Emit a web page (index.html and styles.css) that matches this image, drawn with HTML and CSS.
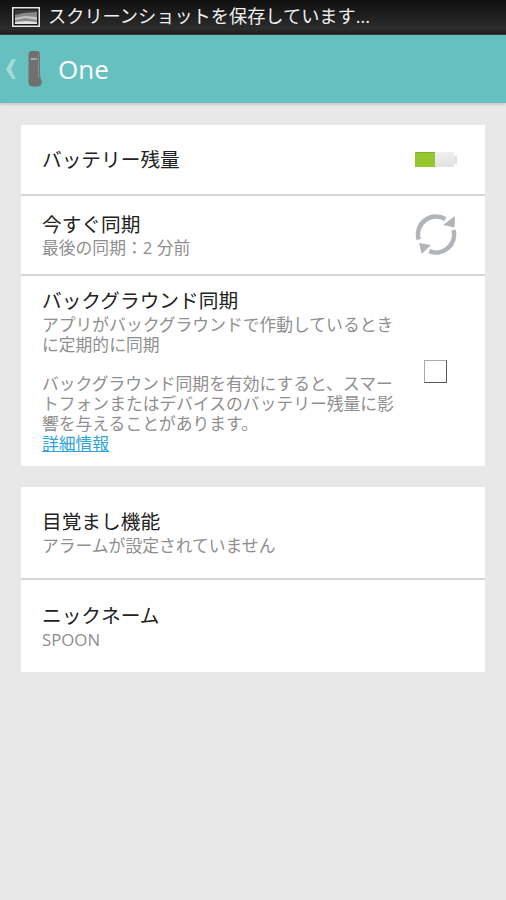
FILE: index.html
```html
<!DOCTYPE html>
<html lang="ja">
<head>
    <meta charset="UTF-8">
    <meta name="viewport" content="width=device-width, initial-scale=1.0">
    <title>One</title>
    <link rel="stylesheet" href="styles.css">
</head>
<body>

    <div class="status-bar">
        <svg class="status-icon" width="28" height="20" viewBox="0 0 28 20">
            <rect x="0.75" y="0.75" width="26.5" height="18.5" fill="#1a1a1a" stroke="#e8e8e8" stroke-width="1.5"/>
            <rect x="3" y="3" width="22" height="14" fill="#8a8a8a"/>
            <path d="M3 8 L12 6 L25 5 V3 H3 Z" fill="#3c3c3c"/>
            <path d="M3 11 L13 9 L25 10 V13 L13 11 L3 13 Z" fill="#c4c4c4"/>
            <path d="M3 15 L14 14 L25 15 V17 H3 Z" fill="#e4e4e4"/>
        </svg>
        <span class="status-text">スクリーンショットを保存しています...</span>
    </div>

    <header class="action-bar">
        <svg class="back-icon" width="12" height="20" viewBox="0 0 12 20">
            <path d="M7 0 H11 L6 10 L11 20 H7 L1 10 Z" fill="#a3dad7"/>
        </svg>
        <svg class="device-icon" width="14" height="36" viewBox="0 0 14 36">
            <path d="M4 0 H9 Q12 0 12 4 V23 Q12 27 13.5 30 Q14.5 35.5 9 35.5 H5 Q0.5 35.5 0.5 31 V4 Q0.5 0 4 0 Z" fill="#707070"/>
            <rect x="2.5" y="7" width="6.5" height="2" rx="1" fill="#a8a8a8"/>
            <path d="M10.5 3 V27" stroke="#8e8e8e" stroke-width="1"/>
        </svg>
        <h1 class="action-title">One</h1>
    </header>

    <main class="content">
        <section class="card">
            <div class="row row-battery">
                <div class="row-text">
                    <div class="row-title">バッテリー残量</div>
                </div>
                <div class="battery">
                    <div class="battery-fill"></div>
                    <div class="battery-empty"></div>
                    <div class="battery-tip"></div>
                </div>
            </div>
            <div class="row row-sync">
                <div class="row-text">
                    <div class="row-title">今すぐ同期</div>
                    <div class="row-sub">最後の同期：2 分前</div>
                </div>
                <svg class="sync-icon" width="42" height="42" viewBox="0 0 42 42">
                    <path d="M3.7 25.5 A18 18 0 0 1 30.5 5.2" fill="none" stroke="#b1b5ba" stroke-width="4.5"/>
                    <path d="M38.5 16 A18 18 0 0 1 14.3 37.2" fill="none" stroke="#b1b5ba" stroke-width="4.5"/>
                    <path d="M28 11 L39.5 13.5 L40 2 Z" fill="#b1b5ba"/>
                    <path d="M16 31 L4 29 L6.7 40 Z" fill="#b1b5ba"/>
                </svg>
            </div>
            <div class="row row-background">
                <div class="row-text">
                    <div class="row-title">バックグラウンド同期</div>
                    <div class="row-sub row-first">アプリがバックグラウンドで作動しているときに定期的に同期</div>
                    <div class="row-sub row-note">バックグラウンド同期を有効にすると、スマートフォンまたはデバイスのバッテリー残量に影響を与えることがあります。</div>
                    <a class="row-link" href="#">詳細情報</a>
                </div>
                <div class="checkbox"></div>
            </div>
        </section>

        <section class="card">
            <div class="row row-alarm">
                <div class="row-text">
                    <div class="row-title">目覚まし機能</div>
                    <div class="row-sub row-first">アラームが設定されていません</div>
                </div>
            </div>
            <div class="row row-nick">
                <div class="row-text">
                    <div class="row-title">ニックネーム</div>
                    <div class="row-sub row-first">SPOON</div>
                </div>
            </div>
        </section>
    </main>

</body>
</html>
```

FILE: styles.css
```css
* {
    box-sizing: border-box;
}
body {
    margin: 0;
    height: 900px;
    overflow: hidden;
    background: #e8e8e8;
    font-family: "Open Sans", "Noto Sans CJK JP", sans-serif;
}
.status-bar {
    height: 35px;
    display: flex;
    align-items: center;
    padding-left: 12px;
    background: linear-gradient(#101010, #2c2c2c 85%, #1c1c1c);
    border-bottom: 1px solid #3a3a3a;
}
.status-icon {
    flex: none;
    margin-right: 8px;
}
.status-text {
    color: #f0f0f0;
    font-size: 18.2px;
    line-height: 33px;
    margin-top: -2px;
    white-space: nowrap;
}
.action-bar {
    height: 68px;
    display: flex;
    align-items: center;
    background: #66c0bf;
    box-shadow: 0 2px 2px rgba(0,0,0,0.12);
}
.back-icon {
    flex: none;
    margin-left: 5px;
}
.device-icon {
    flex: none;
    margin-left: 11px;
}
.action-title {
    margin: 0 0 0 16px;
    color: #ffffff;
    font-family: "Open Sans", sans-serif;
    font-size: 26px;
    font-weight: 400;
}
.content {
    padding: 22px 21px 0;
}
.card {
    background: #ffffff;
    margin-bottom: 21px;
}
.row {
    display: flex;
    align-items: center;
    padding: 0 22px 0 21px;
    border-bottom: 2px solid #d6d6d6;
}
.row:last-child {
    border-bottom: none;
}
.row-text {
    flex: 1;
    min-width: 0;
}
.row-battery {
    height: 71px;
}
.row-sync {
    height: 80px;
}
.row-background {
    height: 190px;
}
.row-alarm {
    height: 93px;
}
.row-nick {
    height: 92px;
}
.row-title {
    color: #222222;
    font-size: 19.7px;
    line-height: 26px;
}
.row-sub {
    color: #8f8f8f;
    font-size: 16.8px;
    line-height: 20px;
}
.row-first {
    margin-top: 1px;
}
.row-note {
    margin-top: 19px;
}
.row-background .row-text {
    max-width: 356px;
}
.row-link {
    display: block;
    color: #2fa3dc;
    font-size: 16.8px;
    line-height: 20px;
    text-decoration: underline;
}
.battery {
    flex: none;
    display: flex;
    align-items: center;
    margin-right: 6px;
}
.battery-fill {
    width: 20px;
    height: 15px;
    background: #94c62e;
    border-top: 1px solid #7fb021;
}
.battery-empty {
    width: 19px;
    height: 15px;
    background: linear-gradient(#efefef, #e2e2e2);
}
.battery-tip {
    width: 3px;
    height: 8px;
    background: #e2e2e2;
}
.sync-icon {
    flex: none;
    margin-right: 6px;
}
.checkbox {
    flex: none;
    width: 23px;
    height: 23px;
    margin: 0 16px 0 29px;
    border: 1px solid #555555;
    border-top-color: #aaaaaa;
    border-left-color: #aaaaaa;
}
```
